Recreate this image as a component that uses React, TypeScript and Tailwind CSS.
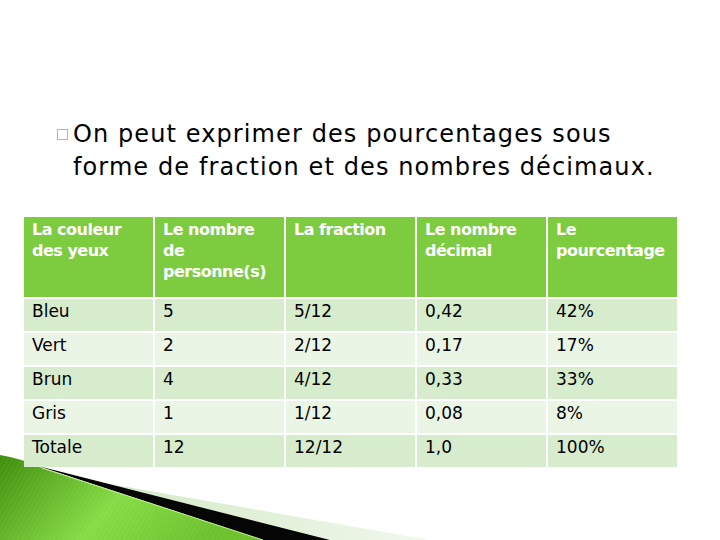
const rows = [
  ["Bleu", "5", "5/12", "0,42", "42%"],
  ["Vert", "2", "2/12", "0,17", "17%"],
  ["Brun", "4", "4/12", "0,33", "33%"],
  ["Gris", "1", "1/12", "0,08", "8%"],
  ["Totale", "12", "12/12", "1,0", "100%"],
];

const headers = [
  ["La couleur", "des yeux"],
  ["Le nombre", "de", "personne(s)"],
  ["La fraction"],
  ["Le nombre", "décimal"],
  ["Le", "pourcentage"],
];

function BottomSwoosh() {
  return (
    <svg className="absolute left-0 bottom-0" width="720" height="100" viewBox="0 0 720 100">
      <defs>
        <linearGradient id="grn" x1="0" y1="0" x2="1" y2="0.3">
          <stop offset="0" stopColor="#3f8d0c" />
          <stop offset="0.55" stopColor="#86dc45" />
          <stop offset="1" stopColor="#6cc12c" />
        </linearGradient>
        <linearGradient id="pale" x1="0" y1="0" x2="1" y2="0">
          <stop offset="0" stopColor="#d3eac6" />
          <stop offset="1" stopColor="#f1f8ed" />
        </linearGradient>
        <pattern id="stripes" width="4" height="4" patternUnits="userSpaceOnUse" patternTransform="rotate(30)">
          <line x1="0" y1="0" x2="0" y2="4" stroke="#ffffff" strokeOpacity="0.12" strokeWidth="1" />
        </pattern>
      </defs>
      <path d="M110,44 L430,100 L330,100 Z" fill="url(#pale)" />
      <path d="M38,26 L330,100 L263,100 Z" fill="#050505" />
      <path d="M0,15 Q20,18 42,28 L263,100 L0,100 Z" fill="url(#grn)" />
      <path d="M0,15 Q20,18 42,28 L263,100 L0,100 Z" fill="url(#stripes)" />
      <path d="M42,28 L263,100" stroke="#b8ee86" strokeWidth="1" />
    </svg>
  );
}

export default function App() {
  return (
    <div className="relative w-[720px] h-[540px] overflow-hidden bg-white text-black" style={{ fontFamily: '"DejaVu Sans", Verdana, sans-serif' }}>
      <BottomSwoosh />
      <div className="relative z-10 flex flex-col">
        <div className="flex items-start pt-[118px] pl-[57px]">
          <div className="w-[16px] h-[33px] flex items-center shrink-0">
            <span className="block w-[11px] h-[11px] border border-[#a3c48f]" />
          </div>
          <p className="text-[24px] leading-[33px] tracking-[1.1px]">
            On peut exprimer des pourcentages sous
            <br />
            forme de fraction et des nombres décimaux.
          </p>
        </div>

        <div className="mt-[33px] ml-[24px] grid grid-cols-[129px_129px_129px_129px_129px] gap-[2px]">
          {headers.map((lines, i) => (
            <div key={i} className="h-[80px] bg-[#7dcb3f] pl-2 pt-[2px] text-white font-bold text-[16px] leading-[21px] tracking-[-0.5px]">
              {lines.map((l, j) => (
                <div key={j}>{l}</div>
              ))}
            </div>
          ))}
          {rows.map((row, r) =>
            row.map((cell, c) => (
              <div
                key={`${r}-${c}`}
                className={`h-[32px] pl-2 pt-[2px] text-[17px] leading-[20px] ${r % 2 === 0 ? "bg-[#d7ebcd]" : "bg-[#ebf5e6]"}`}
              >
                {cell}
              </div>
            ))
          )}
        </div>
      </div>
    </div>
  );
}
